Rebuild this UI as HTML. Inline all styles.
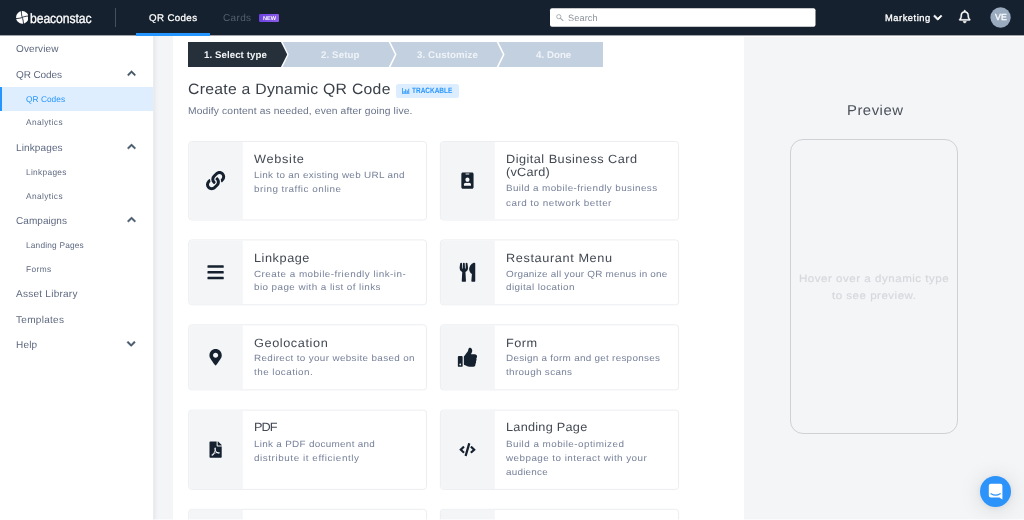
<!DOCTYPE html>
<html lang="en">
<head>
<meta charset="utf-8">
<title>Create a Dynamic QR Code</title>
<style>
*{box-sizing:border-box;margin:0;padding:0}
html,body{width:1024px;height:520px;overflow:hidden;background:#fff;font-family:"Liberation Sans",sans-serif;color:#5e6980}
#app{position:absolute;left:0;top:0;width:1024px;height:520px;will-change:transform}
.abs{position:absolute}
.tx{position:absolute;white-space:nowrap;transform-origin:0 0;text-rendering:geometricPrecision}
.hdr{position:absolute;left:0;top:0;width:1024px;height:35px;background:#16212f}
.side{position:absolute;left:0;top:35px;width:153px;height:485px;background:#fff}
.gap{position:absolute;left:153px;top:36px;width:20px;height:484px;background:linear-gradient(90deg,#eef0f3 0,#e7e9ed 1px,#f0f1f4 3.5px,#f4f5f7 6.5px)}
.prev{position:absolute;left:744px;top:37px;width:280px;height:483px;background:#f4f5f7}
</style>
</head>
<body>
<div id="app">
<header>
<div class="hdr"></div>
<svg class="abs" style="left:15.7px;top:11.1px" width="12.6" height="12.8" viewBox="0 0 100 100"><circle cx="50" cy="50" r="50" fill="#fff"/><g stroke="#16212f" stroke-width="7" fill="none"><path d="M42 -2 C43 25 46 40 50 50 S58 78 60 102"/><path d="M-2 59 C25 58 40 55 50 50 S78 40 102 39"/></g></svg>
<div class="abs" style="left:115px;top:8px;width:1px;height:19px;background:#465060"></div>
<div class="abs" style="left:258.7px;top:14px;width:20.4px;height:8.4px;border-radius:1.2px;background:linear-gradient(90deg,#6a43e0,#8f5ce9)"></div>
<svg class="abs" style="left:549px;top:7px" width="268" height="21" viewBox="549 7 268 21"><rect x="550" y="8.3" width="265.5" height="18.4" rx="2" fill="#fff"/></svg>
<svg class="abs" style="left:556.2px;top:13.6px" width="7.6" height="7.2" viewBox="0 0 76 72"><circle cx="28" cy="27" r="21" fill="none" stroke="#a3a8af" stroke-width="9"/><path d="M43 42 L70 67" stroke="#a3a8af" stroke-width="11" stroke-linecap="round"/></svg>
<svg class="abs" style="left:988px;top:5px" width="26" height="26" viewBox="988 5 26 26"><circle cx="1000.55" cy="17.5" r="10.15" fill="#9aabbf"/></svg>
<svg class="abs" style="left:0;top:0" width="1024" height="520" viewBox="0 0 1024 520">
<path transform="translate(933.69 13.00) scale(0.01836)" fill="#fff" stroke="#fff" stroke-width="40" d="M207.029 381.476L12.686 187.132c-9.373-9.373-9.373-24.569 0-33.941l22.667-22.667c9.357-9.357 24.522-9.375 33.901-.040L224 284.505l154.745-154.021c9.379-9.335 24.544-9.317 33.901.040l22.667 22.667c9.373 9.373 9.373 24.569 0 33.941L240.971 381.476c-9.373 9.372-24.569 9.372-33.942 0z"/>
<path transform="translate(959.06 10.00) scale(0.02539)" fill="#fff" stroke="#fff" stroke-width="14" d="M439.390 362.290c-19.320-20.760-55.470-51.990-55.470-154.290 0-77.700-54.480-139.900-127.940-155.160V32c0-17.670-14.320-32-31.980-32s-31.980 14.330-31.980 32v20.840C118.560 68.100 64.080 130.300 64.080 208c0 102.300-36.150 133.530-55.470 154.290-6 6.450-8.660 14.160-8.610 21.710.110 16.400 12.980 32 32.100 32h383.800c19.120 0 32-15.600 32.100-32 .05-7.550-2.610-15.270-8.610-21.710zM67.530 368c21.220-27.970 44.420-74.330 44.530-159.420 0-.2-.06-.38-.06-.58 0-61.860 50.140-112 112-112s112 50.140 112 112c0 .2-.06.38-.06.58.110 85.100 23.310 131.460 44.530 159.420H67.530zM224 512c35.320 0 63.970-28.650 63.970-64H160.030c0 35.350 28.650 64 63.970 64z"/>
</svg>
<div class="tx" style="left:30.48px;top:9.90px;font-size:13.6px;line-height:17.0px;color:#fff;letter-spacing:-0.100px;transform:scaleX(0.8982);-webkit-text-stroke:.3px #fff">beaconstac</div>
<div class="tx" style="left:148.80px;top:12.60px;font-size:9.7px;line-height:12.12px;color:#fff;letter-spacing:0.380px;transform:scaleX(1.0020);-webkit-text-stroke:.25px #fff">QR Codes</div>
<div class="tx" style="left:223.10px;top:12.70px;font-size:10px;line-height:12.5px;color:#555f6d;letter-spacing:0.328px;transform:scaleX(1.0020)">Cards</div>
<div class="tx" style="left:262.94px;top:16.40px;font-size:5.6px;line-height:7.0px;color:#fff;letter-spacing:0.025px;font-weight:bold;transform:scaleX(1.0020)">NEW</div>
<div class="tx" style="left:567.51px;top:13.00px;font-size:9.2px;line-height:11.5px;color:#8b919a;letter-spacing:0.092px;transform:scaleX(1.0020)">Search</div>
<div class="tx" style="left:885.01px;top:13.30px;font-size:9.3px;line-height:11.62px;color:#fff;letter-spacing:0.532px;transform:scaleX(1.0020);-webkit-text-stroke:.3px #fff">Marketing</div>
<div class="tx" style="left:994.51px;top:12.40px;font-size:8.8px;line-height:11.0px;color:#fff;letter-spacing:0.126px;transform:scaleX(1.0020);-webkit-text-stroke:.25px #fff">VE</div>
</header>
<nav>
<div class="side"></div>
<div class="abs" style="left:0;top:87px;width:153.5px;height:23.7px;background:#deeeff"></div>
<div class="abs" style="left:0;top:87px;width:2px;height:23.7px;background:#2595ff"></div>
<svg class="abs" style="left:0;top:0" width="1024" height="520" viewBox="0 0 1024 520">
<path transform="translate(127.48 68.60) scale(0.01816)" fill="#44576a" stroke="#44576a" stroke-width="34" d="M240.971 130.524l194.343 194.343c9.373 9.373 9.373 24.569 0 33.941l-22.667 22.667c-9.357 9.357-24.522 9.375-33.901.040L224 227.495 69.255 381.516c-9.379 9.335-24.544 9.317-33.901-.040l-22.667-22.667c-9.373-9.373-9.373-24.569 0-33.941L207.030 130.525c9.372-9.373 24.568-9.373 33.941-.001z"/>
<path transform="translate(127.48 141.80) scale(0.01816)" fill="#44576a" stroke="#44576a" stroke-width="34" d="M240.971 130.524l194.343 194.343c9.373 9.373 9.373 24.569 0 33.941l-22.667 22.667c-9.357 9.357-24.522 9.375-33.901.040L224 227.495 69.255 381.516c-9.379 9.335-24.544 9.317-33.901-.040l-22.667-22.667c-9.373-9.373-9.373-24.569 0-33.941L207.030 130.525c9.372-9.373 24.568-9.373 33.941-.001z"/>
<path transform="translate(127.48 214.90) scale(0.01816)" fill="#44576a" stroke="#44576a" stroke-width="34" d="M240.971 130.524l194.343 194.343c9.373 9.373 9.373 24.569 0 33.941l-22.667 22.667c-9.357 9.357-24.522 9.375-33.901.040L224 227.495 69.255 381.516c-9.379 9.335-24.544 9.317-33.901-.040l-22.667-22.667c-9.373-9.373-9.373-24.569 0-33.941L207.030 130.525c9.372-9.373 24.568-9.373 33.941-.001z"/>
<path transform="translate(127.08 339.25) scale(0.01816)" fill="#44576a" stroke="#44576a" stroke-width="34" d="M207.029 381.476L12.686 187.132c-9.373-9.373-9.373-24.569 0-33.941l22.667-22.667c9.357-9.357 24.522-9.375 33.901-.040L224 284.505l154.745-154.021c9.379-9.335 24.544-9.317 33.901.040l22.667 22.667c9.373 9.373 9.373 24.569 0 33.941L240.971 381.476c-9.373 9.372-24.569 9.372-33.942 0z"/>
</svg>
<div class="tx" style="left:15.50px;top:44.30px;font-size:10px;line-height:12.5px;color:#5e6980;letter-spacing:0.088px;transform:scaleX(1.0020)">Overview</div>
<div class="tx" style="left:15.50px;top:69.90px;font-size:10px;line-height:12.5px;color:#5e6980;letter-spacing:-0.127px;transform:scaleX(1.0020)">QR Codes</div>
<div class="tx" style="left:15.50px;top:143.00px;font-size:10px;line-height:12.5px;color:#5e6980;letter-spacing:0.113px;transform:scaleX(1.0020)">Linkpages</div>
<div class="tx" style="left:15.50px;top:216.00px;font-size:10px;line-height:12.5px;color:#5e6980;letter-spacing:0.038px;transform:scaleX(1.0020)">Campaigns</div>
<div class="tx" style="left:15.50px;top:289.25px;font-size:10px;line-height:12.5px;color:#5e6980;letter-spacing:0.249px;transform:scaleX(1.0020)">Asset Library</div>
<div class="tx" style="left:15.50px;top:314.50px;font-size:10px;line-height:12.5px;color:#5e6980;letter-spacing:0.284px;transform:scaleX(1.0020)">Templates</div>
<div class="tx" style="left:15.50px;top:340.00px;font-size:10px;line-height:12.5px;color:#5e6980;letter-spacing:0.174px;transform:scaleX(1.0020)">Help</div>
<div class="tx" style="left:25.72px;top:93.80px;font-size:8.3px;line-height:10.38px;color:#2595ff;letter-spacing:0.033px;transform:scaleX(1.0020)">QR Codes</div>
<div class="tx" style="left:25.72px;top:117.40px;font-size:8.3px;line-height:10.38px;color:#5e6980;letter-spacing:0.408px;transform:scaleX(1.0020)">Analytics</div>
<div class="tx" style="left:25.72px;top:166.80px;font-size:8.3px;line-height:10.38px;color:#5e6980;letter-spacing:0.317px;transform:scaleX(1.0020)">Linkpages</div>
<div class="tx" style="left:25.72px;top:190.50px;font-size:8.3px;line-height:10.38px;color:#5e6980;letter-spacing:0.408px;transform:scaleX(1.0020)">Analytics</div>
<div class="tx" style="left:25.72px;top:239.80px;font-size:8.3px;line-height:10.38px;color:#5e6980;letter-spacing:0.187px;transform:scaleX(1.0020)">Landing Pages</div>
<div class="tx" style="left:25.72px;top:263.80px;font-size:8.3px;line-height:10.38px;color:#5e6980;letter-spacing:0.400px;transform:scaleX(1.0020)">Forms</div>
</nav>
<div class="gap"></div>
<div class="prev"></div>
<div class="abs" style="left:0;top:35px;width:1024px;height:1px;background:#a2a6ac"></div>
<div class="abs" style="left:135.5px;top:33px;width:74.5px;height:3px;background:#2595ff"></div>
<main>
<svg class="abs" style="left:188px;top:41.7px" width="416" height="25" viewBox="188 0 416 25">
<rect x="188" y="0" width="415" height="25" fill="#c3d0df"/>
<path d="M281.20000000000005 -1 L287.8 12.5 L281.20000000000005 26" stroke="#fff" stroke-width="1.6" fill="none"/>
<path d="M389.1 -1 L395.7 12.5 L389.1 26" stroke="#fff" stroke-width="1.6" fill="none"/>
<path d="M497.1 -1 L503.7 12.5 L497.1 26" stroke="#fff" stroke-width="1.6" fill="none"/>
<path d="M188 0 H280.9 L287.2 12.5 L280.9 25 H188 Z" fill="#26303b"/>
</svg>
<div class="abs" style="left:396px;top:83.8px;width:63px;height:14.2px;border-radius:2.5px;background:#dbedff"></div>
<svg class="abs" style="left:402px;top:87.6px" width="7.6" height="6.4" viewBox="0 0 76 64"><path d="M4 0V58H76" stroke="#2595ff" stroke-width="9" fill="none"/><path d="M16 50V30h10v20zM32 50V12h10v38zM48 50V26h10v24zM63 50V8h9v42z" fill="#2595ff"/></svg>
<svg class="abs" style="left:0;top:0" width="1024" height="520" viewBox="0 0 1024 520">
<rect x="188.70" y="141.50" width="237.80" height="78.50" rx="3" fill="#fff" stroke="#ecedf1"/>
<path d="M242.80 142.00 V219.50 H192.20 A3 3 0 0 1 189.20 216.50 V145.00 A3 3 0 0 1 192.20 142.00 Z" fill="#f4f5f7"/>
<rect x="440.40" y="141.50" width="238.20" height="78.50" rx="3" fill="#fff" stroke="#ecedf1"/>
<path d="M494.80 142.00 V219.50 H443.90 A3 3 0 0 1 440.90 216.50 V145.00 A3 3 0 0 1 443.90 142.00 Z" fill="#f4f5f7"/>
<rect x="188.70" y="239.90" width="237.80" height="64.90" rx="3" fill="#fff" stroke="#ecedf1"/>
<path d="M242.80 240.40 V304.30 H192.20 A3 3 0 0 1 189.20 301.30 V243.40 A3 3 0 0 1 192.20 240.40 Z" fill="#f4f5f7"/>
<rect x="440.40" y="239.90" width="238.20" height="64.90" rx="3" fill="#fff" stroke="#ecedf1"/>
<path d="M494.80 240.40 V304.30 H443.90 A3 3 0 0 1 440.90 301.30 V243.40 A3 3 0 0 1 443.90 240.40 Z" fill="#f4f5f7"/>
<rect x="188.70" y="324.80" width="237.80" height="65.10" rx="3" fill="#fff" stroke="#ecedf1"/>
<path d="M242.80 325.30 V389.40 H192.20 A3 3 0 0 1 189.20 386.40 V328.30 A3 3 0 0 1 192.20 325.30 Z" fill="#f4f5f7"/>
<rect x="440.40" y="324.80" width="238.20" height="65.10" rx="3" fill="#fff" stroke="#ecedf1"/>
<path d="M494.80 325.30 V389.40 H443.90 A3 3 0 0 1 440.90 386.40 V328.30 A3 3 0 0 1 443.90 325.30 Z" fill="#f4f5f7"/>
<rect x="188.70" y="410.10" width="237.80" height="79.30" rx="3" fill="#fff" stroke="#ecedf1"/>
<path d="M242.80 410.60 V488.90 H192.20 A3 3 0 0 1 189.20 485.90 V413.60 A3 3 0 0 1 192.20 410.60 Z" fill="#f4f5f7"/>
<rect x="440.40" y="410.10" width="238.20" height="79.30" rx="3" fill="#fff" stroke="#ecedf1"/>
<path d="M494.80 410.60 V488.90 H443.90 A3 3 0 0 1 440.90 485.90 V413.60 A3 3 0 0 1 443.90 410.60 Z" fill="#f4f5f7"/>
<rect x="188.70" y="509.30" width="237.80" height="70.20" rx="3" fill="#fff" stroke="#ecedf1"/>
<path d="M242.80 509.80 V579.00 H192.20 A3 3 0 0 1 189.20 576.00 V512.80 A3 3 0 0 1 192.20 509.80 Z" fill="#f4f5f7"/>
<rect x="440.40" y="509.30" width="238.20" height="70.20" rx="3" fill="#fff" stroke="#ecedf1"/>
<path d="M494.80 509.80 V579.00 H443.90 A3 3 0 0 1 440.90 576.00 V512.80 A3 3 0 0 1 443.90 509.80 Z" fill="#f4f5f7"/>
</svg>
<svg class="abs" style="left:0;top:0" width="1024" height="520" viewBox="0 0 1024 520">
<path transform="translate(206.00 171.05) scale(0.03750)" fill="#16212f" d="M326.612 185.391c59.747 59.809 58.927 155.698.36 214.59-.11.12-.24.25-.36.37l-67.2 67.2c-59.27 59.27-155.699 59.262-214.96 0-59.27-59.26-59.27-155.7 0-214.96l37.106-37.106c9.84-9.84 26.786-3.3 27.294 10.606.648 17.722 3.826 35.527 9.69 52.721 1.986 5.822.567 12.262-3.783 16.612l-13.087 13.087c-28.026 28.026-28.905 73.66-1.155 101.96 28.024 28.579 74.086 28.749 102.325.51l67.2-67.19c28.191-28.191 28.073-73.757 0-101.83-3.701-3.694-7.429-6.564-10.341-8.569a16.037 16.037 0 0 1-6.947-12.606c-.396-10.567 3.348-21.456 11.698-29.806l21.054-21.055c5.521-5.521 14.182-6.199 20.584-1.731a152.482 152.482 0 0 1 20.522 17.197zM467.547 44.449c-59.261-59.262-155.69-59.27-214.96 0l-67.2 67.2c-.12.12-.25.25-.36.37-58.566 58.892-59.387 154.781.36 214.59a152.454 152.454 0 0 0 20.521 17.196c6.402 4.468 15.064 3.789 20.584-1.731l21.054-21.055c8.35-8.35 12.094-19.239 11.698-29.806a16.037 16.037 0 0 0-6.947-12.606c-2.912-2.005-6.64-4.875-10.341-8.569-28.073-28.073-28.191-73.639 0-101.83l67.2-67.19c28.239-28.239 74.3-28.069 102.325.51 27.75 28.3 26.872 73.934-1.155 101.96l-13.087 13.087c-4.35 4.35-5.769 10.79-3.783 16.612 5.864 17.194 9.042 34.999 9.69 52.721.509 13.906 17.454 20.446 27.294 10.606l37.106-37.106c59.271-59.259 59.271-155.699.001-214.959z"/>
<path transform="translate(461.34 172.50) scale(0.03184)" fill="#16212f" d="M336 0H48C21.5 0 0 21.5 0 48v416c0 26.5 21.5 48 48 48h288c26.500 0 48-21.500 48-48V48c0-26.500-21.500-48-48-48zM144 32h96c8.800 0 16 7.200 16 16s-7.200 16-16 16h-96c-8.800 0-16-7.200-16-16s7.200-16 16-16zm48 128c35.300 0 64 28.700 64 64s-28.700 64-64 64-64-28.700-64-64 28.700-64 64-64zm112 236.800c0 10.600-10 19.200-22.400 19.200H102.400C90 416 80 407.400 80 396.800v-19.200c0-31.800 30.100-57.600 67.200-57.600h5c12.300 5.100 25.700 8 39.800 8s27.600-2.900 39.800-8h5c37.100 0 67.200 25.800 67.200 57.600v19.200z"/>
<path transform="translate(207.46 262.95) scale(0.03633)" fill="#16212f" d="M16 132h416c8.837 0 16-7.163 16-16V76c0-8.837-7.163-16-16-16H16C7.163 60 0 67.163 0 76v40c0 8.837 7.163 16 16 16zm0 160h416c8.837 0 16-7.163 16-16v-40c0-8.837-7.163-16-16-16H16c-8.837 0-16 7.163-16 16v40c0 8.837 7.163 16 16 16zm0 160h416c8.837 0 16-7.163 16-16v-40c0-8.837-7.163-16-16-16H16c-8.837 0-16 7.163-16 16v40c0 8.837 7.163 16 16 16z"/>
<path transform="translate(459.65 262.65) scale(0.03750)" fill="#16212f" d="M207.900 15.200c.8 4.700 16.100 94.500 16.100 128.800 0 52.300-27.800 89.600-68.900 104.600L168 486.700c.7 13.700-10.200 25.300-24 25.300H80c-13.700 0-24.700-11.500-24-25.300l12.900-238.100C27.700 233.600 0 196.200 0 144 0 109.600 15.300 19.900 16.100 15.200 19.300-5.100 61.400-5.400 64 16.300v141.200c1.300 3.400 15.100 3.200 16 0 1.400-25.300 7.900-139.200 8-141.800 3.300-20.800 44.700-20.800 47.900 0 .2 2.700 6.600 116.500 8 141.800.9 3.200 14.800 3.400 16 0V16.300c2.600-21.600 44.800-21.400 48-1.100zm119.200 285.700l-15 185.100c-1.200 14 9.900 26 23.900 26h56c13.300 0 24-10.700 24-24V24c0-13.200-10.700-24-24-24-82.500 0-221.400 178.500-64.900 300.900z"/>
<path transform="translate(209.45 349.05) scale(0.03203)" fill="#16212f" d="M172.268 501.670C26.970 291.031 0 269.413 0 192 0 85.961 85.961 0 192 0s192 85.961 192 192c0 77.413-26.970 99.031-172.268 309.670-9.535 13.774-29.930 13.773-39.464 0zM192 272c44.183 0 80-35.817 80-80s-35.817-80-80-80-80 35.817-80 80 35.817 80 80 80z"/>
<path transform="translate(457.85 347.65) scale(0.03750)" fill="#16212f" d="M104 224H24c-13.255 0-24 10.745-24 24v240c0 13.255 10.745 24 24 24h80c13.255 0 24-10.745 24-24V248c0-13.255-10.745-24-24-24zM64 472c-13.255 0-24-10.745-24-24s10.745-24 24-24 24 10.745 24 24-10.745 24-24 24zM384 81.452c0 42.416-25.970 66.208-33.277 94.548h101.723c33.397 0 59.397 27.746 59.553 58.098.084 17.938-7.546 37.249-19.439 49.197l-.110.110c9.836 23.337 8.237 56.037-9.308 79.469 8.681 25.895-.069 57.704-16.382 74.757 4.298 17.598 2.244 32.575-6.148 44.632C440.202 511.587 389.616 512 346.839 512l-2.845-.001c-48.287-.017-87.806-17.598-119.560-31.725-15.957-7.099-36.821-15.887-52.651-16.178-6.540-.120-11.783-5.457-11.783-11.998v-213.770c0-3.200 1.282-6.271 3.558-8.521 39.614-39.144 56.648-80.587 89.117-113.111 14.804-14.832 20.188-37.236 25.393-58.902C282.515 39.293 291.817 0 312 0c24 0 72 8 72 81.452z"/>
<path transform="translate(209.49 441.50) scale(0.03184)" fill="#16212f" d="M181.900 256.100c-5-16-4.900-46.900-2-46.900 8.400 0 7.600 36.900 2 46.900zm-1.700 47.200c-7.700 20.200-17.300 43.300-28.400 62.700 18.300-7 39-17.200 62.900-21.900-12.700-9.600-24.900-23.400-34.500-40.800zM86.100 428.100c0 .8 13.200-5.400 34.900-40.200-6.700 6.300-29.100 24.500-34.900 40.200zM248 160h136v328c0 13.300-10.700 24-24 24H24c-13.300 0-24-10.700-24-24V24C0 10.700 10.700 0 24 0h200v136c0 13.200 10.800 24 24 24zm-8 171.800c-20-12.200-33.300-29-42.700-53.800 4.500-18.500 11.600-46.600 6.200-64.200-4.700-29.400-42.400-26.500-47.800-6.800-5 18.300-.4 44.100 8.100 77-11.600 27.600-28.700 64.600-40.800 85.800-.1 0-.1.100-.2.100-27.100 13.900-73.600 44.500-54.500 68 5.600 6.900 16 10 21.500 10 17.900 0 35.700-18 61.100-61.800 25.800-8.500 54.100-19.100 79-23.200 21.700 11.800 47.100 19.500 64 19.500 29.200 0 31.200-32 19.700-43.400-13.900-13.600-54.300-9.700-73.600-7.200zM377 105L279 7c-4.500-4.500-10.600-7-17-7h-6v128h128v-6.100c0-6.300-2.500-12.400-7-16.900zm-74.100 255.300c4.100-2.700-2.500-11.900-42.800-9 37.100 15.800 42.800 9 42.800 9z"/>
<path transform="translate(459.26 443.10) scale(0.02559)" fill="#16212f" d="M278.900 511.500l-61-17.700c-6.400-1.800-10-8.500-8.200-14.900L346.200 8.700c1.800-6.400 8.500-10 14.900-8.200l61 17.700c6.400 1.800 10 8.500 8.200 14.900L293.800 503.300c-1.900 6.400-8.500 10.100-14.900 8.200zm-114-112.200l43.500-46.400c4.600-4.900 4.300-12.700-.8-17.200L117 256l90.600-79.700c5.100-4.500 5.500-12.300.8-17.200l-43.500-46.400c-4.500-4.800-12.100-5.100-17-.5L3.800 247.200c-5.100 4.700-5.100 12.800 0 17.500l144.100 135.100c4.900 4.600 12.500 4.400 17-.5zm327.200.6l144.100-135.100c5.100-4.700 5.100-12.800 0-17.500L492.100 112.100c-4.800-4.500-12.400-4.300-17 .5L431.600 159c-4.600 4.900-4.300 12.700.8 17.200L523 256l-90.600 79.700c-5.100 4.500-5.500 12.300-.8 17.200l43.500 46.400c4.500 4.900 12.100 5.100 17 .6z"/>
</svg>
<div class="tx" style="left:204.40px;top:50.00px;font-size:9.7px;line-height:12.12px;color:#f1f3f5;letter-spacing:0.058px;font-weight:bold;transform:scaleX(1.0020)">1. Select type</div>
<div class="tx" style="left:321.15px;top:50.00px;font-size:9.7px;line-height:12.12px;color:#eff3f8;letter-spacing:0.108px;font-weight:bold;transform:scaleX(1.0020)">2. Setup</div>
<div class="tx" style="left:417.40px;top:50.00px;font-size:9.7px;line-height:12.12px;color:#eff3f8;letter-spacing:0.084px;font-weight:bold;transform:scaleX(1.0020)">3. Customize</div>
<div class="tx" style="left:536.15px;top:50.00px;font-size:9.7px;line-height:12.12px;color:#eff3f8;letter-spacing:0.032px;font-weight:bold;transform:scaleX(1.0020)">4. Done</div>
<div class="tx" style="left:188.34px;top:81.00px;font-size:15px;line-height:18.75px;color:#3a4049;letter-spacing:0.262px;transform:scaleX(1.0500)">Create a Dynamic QR Code</div>
<div class="tx" style="left:412.44px;top:86.30px;font-size:7.8px;line-height:9.75px;color:#2595ff;letter-spacing:0.000px;font-weight:bold;transform:scaleX(0.8313)">TRACKABLE</div>
<div class="tx" style="left:188.00px;top:106.00px;font-size:9.8px;line-height:12.25px;color:#68738a;letter-spacing:0.120px;transform:scaleX(1.0500)">Modify content as needed, even after going live.</div>
<div class="tx" style="left:253.67px;top:151.50px;font-size:12px;line-height:15.0px;color:#434953;letter-spacing:0.664px;transform:scaleX(1.0600)">Website</div>
<div class="tx" style="left:253.70px;top:169.80px;font-size:9px;line-height:11.25px;color:#78829a;letter-spacing:0.269px;transform:scaleX(1.1000)">Link to an existing web URL and</div>
<div class="tx" style="left:253.70px;top:183.90px;font-size:9px;line-height:11.25px;color:#78829a;letter-spacing:0.432px;transform:scaleX(1.1000)">bring traffic online</div>
<div class="tx" style="left:505.67px;top:151.60px;font-size:12px;line-height:15.0px;color:#434953;letter-spacing:0.446px;transform:scaleX(1.0600)">Digital Business Card</div>
<div class="tx" style="left:505.67px;top:165.40px;font-size:12px;line-height:15.0px;color:#434953;letter-spacing:0.226px;transform:scaleX(1.0600)">(vCard)</div>
<div class="tx" style="left:505.70px;top:183.10px;font-size:9px;line-height:11.25px;color:#78829a;letter-spacing:0.348px;transform:scaleX(1.1000)">Build a mobile-friendly business</div>
<div class="tx" style="left:505.70px;top:197.50px;font-size:9px;line-height:11.25px;color:#78829a;letter-spacing:0.418px;transform:scaleX(1.1000)">card to network better</div>
<div class="tx" style="left:253.67px;top:250.80px;font-size:12px;line-height:15.0px;color:#434953;letter-spacing:0.514px;transform:scaleX(1.0600)">Linkpage</div>
<div class="tx" style="left:253.70px;top:268.60px;font-size:9px;line-height:11.25px;color:#78829a;letter-spacing:0.420px;transform:scaleX(1.1000)">Create a mobile-friendly link-in-</div>
<div class="tx" style="left:253.70px;top:282.40px;font-size:9px;line-height:11.25px;color:#78829a;letter-spacing:0.373px;transform:scaleX(1.1000)">bio page with a list of links</div>
<div class="tx" style="left:505.67px;top:250.80px;font-size:12px;line-height:15.0px;color:#434953;letter-spacing:0.571px;transform:scaleX(1.0600)">Restaurant Menu</div>
<div class="tx" style="left:505.70px;top:268.60px;font-size:9px;line-height:11.25px;color:#78829a;letter-spacing:0.189px;transform:scaleX(1.1000)">Organize all your QR menus in one</div>
<div class="tx" style="left:505.70px;top:282.40px;font-size:9px;line-height:11.25px;color:#78829a;letter-spacing:0.348px;transform:scaleX(1.1000)">digital location</div>
<div class="tx" style="left:253.67px;top:335.80px;font-size:12px;line-height:15.0px;color:#434953;letter-spacing:0.553px;transform:scaleX(1.0600)">Geolocation</div>
<div class="tx" style="left:253.70px;top:353.20px;font-size:9px;line-height:11.25px;color:#78829a;letter-spacing:0.310px;transform:scaleX(1.1000)">Redirect to your website based on</div>
<div class="tx" style="left:253.70px;top:367.40px;font-size:9px;line-height:11.25px;color:#78829a;letter-spacing:0.401px;transform:scaleX(1.1000)">the location.</div>
<div class="tx" style="left:505.67px;top:335.80px;font-size:12px;line-height:15.0px;color:#434953;letter-spacing:0.432px;transform:scaleX(1.0600)">Form</div>
<div class="tx" style="left:505.70px;top:353.10px;font-size:9px;line-height:11.25px;color:#78829a;letter-spacing:0.244px;transform:scaleX(1.1000)">Design a form and get responses</div>
<div class="tx" style="left:505.70px;top:367.40px;font-size:9px;line-height:11.25px;color:#78829a;letter-spacing:0.288px;transform:scaleX(1.1000)">through scans</div>
<div class="tx" style="left:254.07px;top:420.40px;font-size:12px;line-height:15.0px;color:#434953;letter-spacing:-0.889px;transform:scaleX(1.0600)">PDF</div>
<div class="tx" style="left:253.70px;top:438.50px;font-size:9px;line-height:11.25px;color:#78829a;letter-spacing:0.262px;transform:scaleX(1.1000)">Link a PDF document and</div>
<div class="tx" style="left:253.70px;top:452.80px;font-size:9px;line-height:11.25px;color:#78829a;letter-spacing:0.503px;transform:scaleX(1.1000)">distribute it efficiently</div>
<div class="tx" style="left:505.67px;top:420.40px;font-size:12px;line-height:15.0px;color:#434953;letter-spacing:0.234px;transform:scaleX(1.0600)">Landing Page</div>
<div class="tx" style="left:505.70px;top:438.50px;font-size:9px;line-height:11.25px;color:#78829a;letter-spacing:0.397px;transform:scaleX(1.1000)">Build a mobile-optimized</div>
<div class="tx" style="left:505.70px;top:453.10px;font-size:9px;line-height:11.25px;color:#78829a;letter-spacing:0.390px;transform:scaleX(1.1000)">webpage to interact with your</div>
<div class="tx" style="left:505.70px;top:467.00px;font-size:9px;line-height:11.25px;color:#78829a;letter-spacing:0.194px;transform:scaleX(1.1000)">audience</div>
</main>
<aside>
<div class="abs" style="left:790.4px;top:139px;width:167.8px;height:294.6px;border:1px solid #cfd1d5;border-radius:13px"></div>
<div class="tx" style="left:846.75px;top:103.00px;font-size:14.3px;line-height:17.88px;color:#4b515b;letter-spacing:0.481px;transform:scaleX(1.0400)">Preview</div>
<div class="tx" style="left:799.48px;top:272.60px;font-size:10.5px;line-height:13.12px;color:#d6d8dc;letter-spacing:0.468px;transform:scaleX(1.1000);-webkit-text-stroke:.2px #d6d8dc">Hover over a dynamic type</div>
<div class="tx" style="left:832.28px;top:289.70px;font-size:10.5px;line-height:13.12px;color:#d6d8dc;letter-spacing:0.453px;transform:scaleX(1.1000);-webkit-text-stroke:.2px #d6d8dc">to see preview.</div>
</aside>
<div class="abs" style="left:979.7px;top:475.7px;width:31px;height:31px;border-radius:50%;background:#2b93fa;box-shadow:0 1px 6px rgba(0,0,0,.07),0 2px 22px rgba(0,0,0,.13)"></div>
<svg class="abs" style="left:979.7px;top:475.7px" width="31" height="31" viewBox="0 0 31 31"><path d="M10.8 7.8 H20.4 A2 2 0 0 1 22.4 9.8 V23.6 L19.3 21.6 H10.8 A2 2 0 0 1 8.8 19.6 V9.8 A2 2 0 0 1 10.8 7.8 Z" fill="#fff"/><path d="M11 17.7 Q15.6 20.7 20.2 17.7" stroke="#2b93fa" stroke-width="1.15" fill="none" stroke-linecap="round"/></svg>
<div class="abs" style="left:0;top:519px;width:1024px;height:1px;background:rgba(255,255,255,.55)"></div>
</div>
</body>
</html>
